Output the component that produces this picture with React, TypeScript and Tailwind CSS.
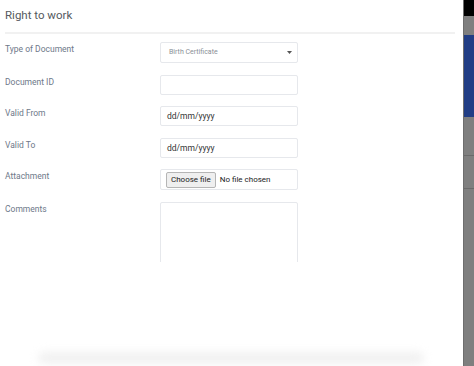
import React from "react";

export default function App() {
  const labelCls = "w-[155px] shrink-0 pt-[1px] text-[8.5px] leading-[12px] text-[#6d7889]";
  const boxCls = "w-[138px] h-[20px] border border-[#e6e8ec] rounded-[2px] bg-white";
  return (
    <div className="flex w-[474px] h-[366px] overflow-hidden bg-white" style={{ fontFamily: "Roboto, 'Liberation Sans', sans-serif" }}>
      <div className="relative flex flex-col w-[463px] h-full">
        <div className="mx-[5px] w-[450px] h-[34px] border-b-2 border-[#f1f1f1] pt-[8px]">
          <div className="text-[11.5px] leading-[14px] text-[#555a60]">Right to work</div>
        </div>
        <div className="px-[5px] pt-[8px] h-[228px] overflow-hidden flex flex-col">
          <div className="flex mb-[12px]">
            <div className={labelCls}>Type of Document</div>
            <div className="w-[138px] h-[21px] border border-[#e6e8ec] rounded-[2px] flex items-center justify-between pl-[8px] pr-[5px]">
              <span className="text-[7px] text-[#8a8f96]">Birth Certificate</span>
              <svg width="5" height="3" viewBox="0 0 5 3"><path d="M0 0h5L2.5 3z" fill="#555" /></svg>
            </div>
          </div>
          <div className="flex mb-[11px]">
            <div className={labelCls}>Document ID</div>
            <div className={boxCls} />
          </div>
          <div className="flex mb-[12px]">
            <div className={labelCls}>Valid From</div>
            <div className={`${boxCls} flex items-center pl-[6px] text-[8.5px] text-[#333]`}>dd/mm/yyyy</div>
          </div>
          <div className="flex mb-[11px]">
            <div className={labelCls}>Valid To</div>
            <div className={`${boxCls} flex items-center pl-[6px] text-[8.5px] text-[#333]`}>dd/mm/yyyy</div>
          </div>
          <div className="flex mb-[12px]">
            <div className={labelCls}>Attachment</div>
            <div className="w-[138px] h-[21px] border border-[#e6e8ec] rounded-[2px] flex items-center pl-[5px] text-[8px] text-[#222]">
              <span className="h-[16px] px-[4px] flex items-center border border-[#b5b5b5] rounded-[2px] bg-[#efefef]">Choose file</span>
              <span className="ml-[4px]">No file chosen</span>
            </div>
          </div>
          <div className="flex">
            <div className={labelCls}>Comments</div>
            <div className="w-[138px] h-[80px] border border-[#e6e8ec] rounded-[2px]" />
          </div>
        </div>
        <div className="mt-auto mb-[2px] ml-[38px] w-[386px] h-[12px] rounded-full bg-[#f1f1f1] blur-[4px]" />
      </div>
      <div className="flex flex-col w-[11px] h-full bg-[#7f7f7f] border-l border-[#6e6e6e]">
        <div className="h-[16px] bg-black" />
        <div className="h-[19px]" />
        <div className="h-[82px] bg-[#213d85]" />
        <div className="h-[38px]" />
        <div className="h-[1px] bg-[#6a6a6a]" />
        <div className="h-[32px]" />
        <div className="h-[1px] bg-[#6a6a6a]" />
      </div>
    </div>
  );
}
